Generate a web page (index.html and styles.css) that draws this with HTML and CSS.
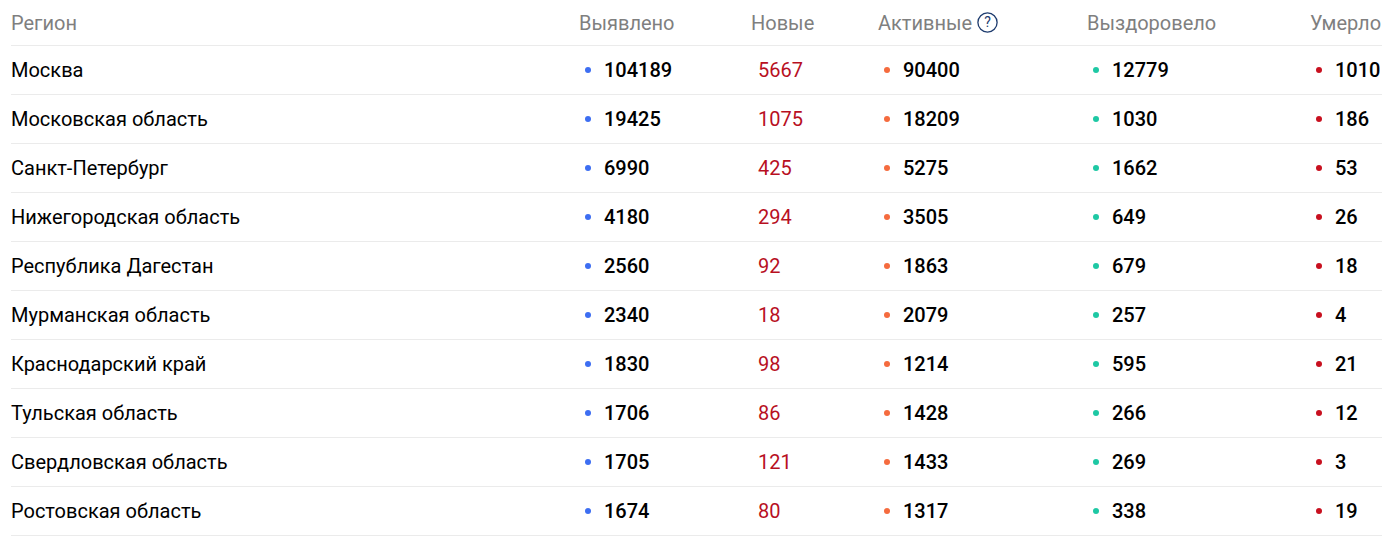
FILE: index.html
```html
<!DOCTYPE html>
<html lang="ru">
<head>
<meta charset="utf-8">
<link rel="stylesheet" href="styles.css">
</head>
<body>
<div class="table">
  <div class="row head">
    <div class="cell">Регион</div>
    <div class="cell">Выявлено</div>
    <div class="cell">Новые</div>
    <div class="cell">Активные <span class="help"><svg width="21" height="21" viewBox="0 0 21 21"><circle cx="10.5" cy="10.5" r="9.6" fill="none" stroke="#1d3b6e" stroke-width="1.3"/><text x="10.5" y="15.3" text-anchor="middle" font-family="Roboto, sans-serif" font-size="14" fill="#1d3b6e">?</text></svg></span></div>
    <div class="cell">Выздоровело</div>
    <div class="cell">Умерло</div>
  </div>
  <div class="row"><div class="cell">Москва</div><div class="cell num"><i class="dot blue"></i>104189</div><div class="cell num new">5667</div><div class="cell num"><i class="dot orange"></i>90400</div><div class="cell num"><i class="dot teal"></i>12779</div><div class="cell num"><i class="dot red"></i>1010</div></div>
  <div class="row"><div class="cell">Московская область</div><div class="cell num"><i class="dot blue"></i>19425</div><div class="cell num new">1075</div><div class="cell num"><i class="dot orange"></i>18209</div><div class="cell num"><i class="dot teal"></i>1030</div><div class="cell num"><i class="dot red"></i>186</div></div>
  <div class="row"><div class="cell">Санкт-Петербург</div><div class="cell num"><i class="dot blue"></i>6990</div><div class="cell num new">425</div><div class="cell num"><i class="dot orange"></i>5275</div><div class="cell num"><i class="dot teal"></i>1662</div><div class="cell num"><i class="dot red"></i>53</div></div>
  <div class="row"><div class="cell">Нижегородская область</div><div class="cell num"><i class="dot blue"></i>4180</div><div class="cell num new">294</div><div class="cell num"><i class="dot orange"></i>3505</div><div class="cell num"><i class="dot teal"></i>649</div><div class="cell num"><i class="dot red"></i>26</div></div>
  <div class="row"><div class="cell">Республика Дагестан</div><div class="cell num"><i class="dot blue"></i>2560</div><div class="cell num new">92</div><div class="cell num"><i class="dot orange"></i>1863</div><div class="cell num"><i class="dot teal"></i>679</div><div class="cell num"><i class="dot red"></i>18</div></div>
  <div class="row"><div class="cell">Мурманская область</div><div class="cell num"><i class="dot blue"></i>2340</div><div class="cell num new">18</div><div class="cell num"><i class="dot orange"></i>2079</div><div class="cell num"><i class="dot teal"></i>257</div><div class="cell num"><i class="dot red"></i>4</div></div>
  <div class="row"><div class="cell">Краснодарский край</div><div class="cell num"><i class="dot blue"></i>1830</div><div class="cell num new">98</div><div class="cell num"><i class="dot orange"></i>1214</div><div class="cell num"><i class="dot teal"></i>595</div><div class="cell num"><i class="dot red"></i>21</div></div>
  <div class="row"><div class="cell">Тульская область</div><div class="cell num"><i class="dot blue"></i>1706</div><div class="cell num new">86</div><div class="cell num"><i class="dot orange"></i>1428</div><div class="cell num"><i class="dot teal"></i>266</div><div class="cell num"><i class="dot red"></i>12</div></div>
  <div class="row"><div class="cell">Свердловская область</div><div class="cell num"><i class="dot blue"></i>1705</div><div class="cell num new">121</div><div class="cell num"><i class="dot orange"></i>1433</div><div class="cell num"><i class="dot teal"></i>269</div><div class="cell num"><i class="dot red"></i>3</div></div>
  <div class="row"><div class="cell">Ростовская область</div><div class="cell num"><i class="dot blue"></i>1674</div><div class="cell num new">80</div><div class="cell num"><i class="dot orange"></i>1317</div><div class="cell num"><i class="dot teal"></i>338</div><div class="cell num"><i class="dot red"></i>19</div></div>
</div>
</body>
</html>
```

FILE: styles.css
```css
html, body {
  margin: 0;
  padding: 0;
  background: #fff;
}
body {
  font-family: Roboto, "Liberation Sans", sans-serif;
  font-size: 20px;
  color: #000;
}
.table {
  margin-left: 11px;
}
.row {
  display: grid;
  grid-template-columns: 568px 172px 127px 209px 223px 1fr;
  height: 48px;
  align-items: center;
  border-bottom: 1px solid #ebebeb;
}
.row.head {
  height: 45px;
  color: #7f7f7f;
}
.cell {
  display: flex;
  align-items: center;
  white-space: nowrap;
}
.help {
  display: inline-flex;
  margin-left: 5px;
}
.num {
  font-weight: 500;
  padding-left: 6px;
}
.new {
  color: #b8101f;
  font-weight: 400;
  padding-left: 7px;
}
.dot {
  width: 6px;
  height: 6px;
  border-radius: 50%;
  margin-right: 13px;
  flex: none;
}
.blue { background: #3d6ef2; }
.orange { background: #f56b3e; }
.teal { background: #1ec8a4; }
.red { background: #c8101f; }
```
